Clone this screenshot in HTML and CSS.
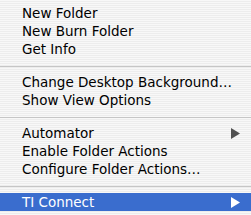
FILE: index.html
```html
<!DOCTYPE html>
<html>
<head>
<meta charset="utf-8">
<link rel="stylesheet" href="styles.css">
</head>
<body>
<div class="menu">
  <div class="item">New Folder</div>
  <div class="item">New Burn Folder</div>
  <div class="item">Get Info</div>
  <div class="sep"></div>
  <div class="item">Change Desktop Background…</div>
  <div class="item">Show View Options</div>
  <div class="sep"></div>
  <div class="item sub">Automator<svg class="arrow" width="9" height="11" viewBox="0 0 9 11"><path d="M0 0 L9 5.5 L0 11 Z"/></svg></div>
  <div class="item">Enable Folder Actions</div>
  <div class="item">Configure Folder Actions…</div>
  <div class="sep"></div>
  <div class="item sub active">TI Connect<svg class="arrow" width="9" height="11" viewBox="0 0 9 11"><path d="M0 0 L9 5.5 L0 11 Z"/></svg></div>
</div>
</body>
</html>
```
FILE: styles.css
```css
html, body {
  margin: 0;
  padding: 0;
}
body {
  width: 251px;
  height: 215px;
  overflow: hidden;
}
.menu {
  width: 251px;
  height: 215px;
  box-sizing: border-box;
  padding-top: 4px;
  background: repeating-linear-gradient(to bottom, #f8f8f8 0px, #f8f8f8 1px, #ededed 1px, #ededed 2px);
  font-family: "DejaVu Sans", "Liberation Sans", sans-serif;
  font-size: 13.5px;
  color: #000;
}
.item {
  height: 18px;
  line-height: 18px;
  padding-left: 22px;
  padding-right: 11px;
  display: flex;
  align-items: center;
  justify-content: space-between;
  white-space: nowrap;
}
.arrow {
  fill: #505050;
}
.active {
  background: #3a6dce;
  color: #fff;
}
.active .arrow {
  fill: #fff;
}
.sep {
  height: 1px;
  margin: 8px 0 6px;
  background: #c6c6c6;
}
```
